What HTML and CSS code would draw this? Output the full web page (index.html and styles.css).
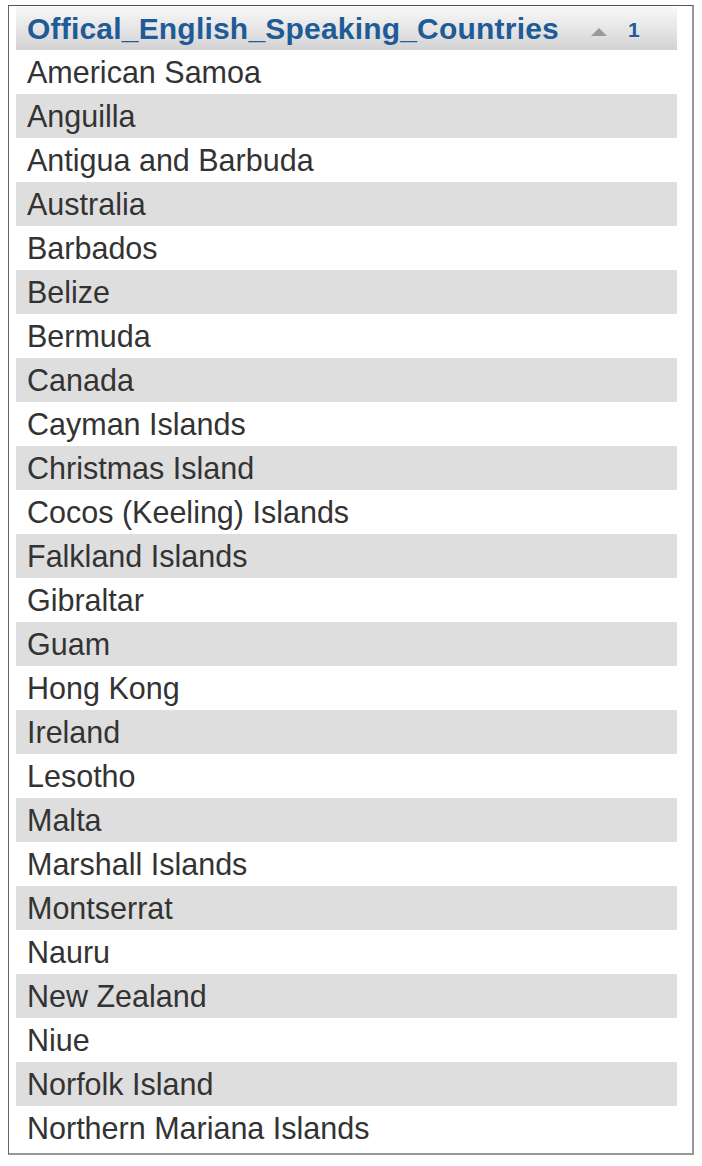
FILE: index.html
```html
<!DOCTYPE html>
<html>
<head>
<meta charset="utf-8">
<link rel="stylesheet" href="styles.css">
</head>
<body>
<div class="frame">
  <div class="grid">
    <div class="head">
      <span class="title">Offical_English_Speaking_Countries</span>
      <span class="sort"><span class="tri"></span><span class="num">1</span></span>
    </div>
    <div class="row">American Samoa</div>
    <div class="row alt">Anguilla</div>
    <div class="row">Antigua and Barbuda</div>
    <div class="row alt">Australia</div>
    <div class="row">Barbados</div>
    <div class="row alt">Belize</div>
    <div class="row">Bermuda</div>
    <div class="row alt">Canada</div>
    <div class="row">Cayman Islands</div>
    <div class="row alt">Christmas Island</div>
    <div class="row">Cocos (Keeling) Islands</div>
    <div class="row alt">Falkland Islands</div>
    <div class="row">Gibraltar</div>
    <div class="row alt">Guam</div>
    <div class="row">Hong Kong</div>
    <div class="row alt">Ireland</div>
    <div class="row">Lesotho</div>
    <div class="row alt">Malta</div>
    <div class="row">Marshall Islands</div>
    <div class="row alt">Montserrat</div>
    <div class="row">Nauru</div>
    <div class="row alt">New Zealand</div>
    <div class="row">Niue</div>
    <div class="row alt">Norfolk Island</div>
    <div class="row">Northern Mariana Islands</div>
  </div>
</div>
</body>
</html>
```
FILE: styles.css
```css
html, body {
  margin: 0;
  padding: 0;
  background: #ffffff;
}
body {
  padding: 5px 0 0 8px;
  font-family: "Liberation Sans", Arial, sans-serif;
}
.frame {
  box-sizing: border-box;
  width: 686px;
  border-top: 1px solid #555;
  border-left: 1px solid #666;
  border-right: 2px solid #999;
  border-bottom: 2px solid #999;
  padding: 1px 15px 3px 7px;
}
.grid {
  display: flex;
  flex-direction: column;
  width: 661px;
}
.head {
  height: 43px;
  display: flex;
  align-items: center;
  padding-left: 11px;
  background: linear-gradient(to bottom, #f7f7f7 0%, #e6e6e6 50%, #d2d2d2 100%);
  color: #1f5b97;
  font-weight: bold;
  font-size: 30px;
  letter-spacing: 0.2px;
  box-sizing: border-box;
}
.sort {
  display: flex;
  align-items: center;
  margin-left: 32px;
}
.tri {
  width: 0;
  height: 0;
  border-left: 8px solid transparent;
  border-right: 8px solid transparent;
  border-bottom: 8px solid #9a9a9a;
  margin-top: 6px;
}
.num {
  margin-left: 21px;
  font-size: 21px;
  margin-top: 3px;
}
.row {
  height: 44px;
  display: flex;
  align-items: center;
  padding-left: 11px;
  font-size: 30.5px;
  color: #333;
  box-sizing: border-box;
}
.alt {
  background: #dedede;
}
```
